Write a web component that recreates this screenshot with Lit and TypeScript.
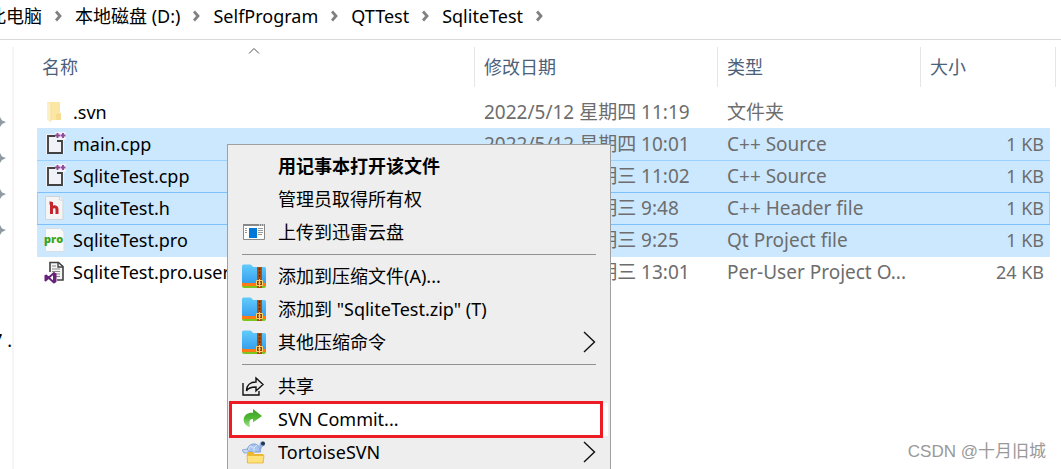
import { LitElement, html, css, svg, nothing } from "lit";
import { customElement } from "lit/decorators.js";
import { classMap } from "lit/directives/class-map.js";

const icons: Record<string, unknown> = {
  folder: svg`<svg viewBox="0 0 22 24" width="22" height="24">
    <path d="M3 2h13v11l1 1v6H3z" fill="#fbe6a4"/><path d="M12 14l5-1v7h-5z" fill="#f8dc8e"/>
    <path d="M3 2l4 2v18l-4-2z" fill="#fdefc4"/><path d="M7 4v18" stroke="#f3d68a" stroke-width=".6"/></svg>`,
  cpp: svg`<svg viewBox="0 0 22 24" width="22" height="24">
    <path d="M2 2h9V0h11v8h-2v14H2z" fill="#f1f1f8"/>
    <path d="M11 4H4v17h14V9H13" fill="none" stroke="#424242" stroke-width="1.900"/>
    <path d="M11 3.500h5M13.500 1v5M16.500 3.500h5M19 1v5" stroke="#93499b" stroke-width="1.900"/></svg>`,
  header: svg`<svg viewBox="0 0 22 24" width="22" height="24">
    <path d="M1.500 .500h14l3.500 3.500v19.500h-17.500z" fill="#f5f5f5" stroke="#cfd4d8"/><path d="M15.500 .500v3.500h3.500" fill="#fff" stroke="#cfd4d8"/>
    <path d="M7.500 6v12M7.500 12.500c1-2.500 5.500-2.500 5.500 1V18M5.500 7h2" fill="none" stroke="#c3272d" stroke-width="3"/></svg>`,
  pro: svg`<svg viewBox="0 0 22 24" width="22" height="24">
    <path d="M1.500 .500h15l3.500 3.500v19.500h-18.500z" fill="#fafafa" stroke="#d9dfe3"/>
    <text x="0" y="15" font-family="Open Sans, sans-serif" font-weight="800" font-size="11" fill="#3fa51b">pro</text></svg>`,
  user: svg`<svg viewBox="0 0 22 24" width="22" height="24">
    <path d="M6 12V2.500h8.500l4.500 4V20h-6" fill="#f4f4f4" stroke="#424242" stroke-width="1.600"/>
    <path d="M14 2.500V7h5" fill="none" stroke="#424242" stroke-width="1.400"/>
    <path d="M8 6h4M8 9h8M8 11.500h8M12 14h4M12 16.500h4" stroke="#8a8a8a"/>
    <path d="M1.500 15v5.500L10 13v9.500L1.500 15M10 13l1.500 1v7.500L10 22.500" fill="none" stroke="#68217a" stroke-width="2" stroke-linejoin="round"/></svg>`,
  disk: svg`<svg viewBox="0 0 24 24" width="24" height="24">
    <path d="M1.500 4.500h21v15h-21z" fill="#fff" stroke="#888"/><path d="M1 4h22v2H1z" fill="#888"/>
    <path d="M17 5h1M19 5h1M21 5h1" stroke="#fff"/>
    <path d="M7 8h8v10H7z" fill="#0078d7"/>
    <path d="M3 8.500h2M3 10.500h2M3 12.500h2M16 8.500h5M16 10.500h5M16 12.500h5M16 14.500h4" stroke="#9a9a9a"/></svg>`,
  zip: svg`<svg viewBox="0 0 24 24" width="24" height="24">
    <defs><linearGradient id="z" x2="0" y2="1"><stop stop-color="#62cbfb"/><stop offset="1" stop-color="#36a0ef"/></linearGradient></defs>
    <path d="M0 18h24v4q0 2-2 2H2q-2 0-2-2z" fill="#7cc51e"/><path d="M0 17h24v5H0z" fill="#ff7a12"/>
    <path d="M0 2q0-1.500 1.500-1.500H8q1 0 2 1.300t2 1.200h10.500Q24 3 24 4.500V19H1.500Q0 19 0 17.500z" fill="url(#z)"/>
    <path d="M15 3h5v21h-5z" fill="#b0500a"/>
    <path d="M17.500 4v12" stroke="#6e2e05" stroke-width="1.600" stroke-dasharray="2 1.500"/>
    <path d="M14.500 16.500h6v5h-6zM17.500 15v8M16 19h3" fill="#8f3e08" stroke="#ffd36b"/></svg>`,
  share: svg`<svg viewBox="0 0 24 24" width="24" height="24">
    <path d="M1 9v12h16v-4M14 4l7 6.500-7 6.500v-4c-5 0-8 1-9.500 4 0-6 4-9 9.500-9z" fill="none" stroke="#111" stroke-width="1.400"/></svg>`,
  commit: svg`<svg viewBox="0 0 24 24" width="24" height="24">
    <defs><linearGradient id="g" x2="0" y2="1"><stop stop-color="#3f9f27"/><stop offset=".5" stop-color="#4fb734"/><stop offset="1" stop-color="#a5e48f"/></linearGradient></defs>
    <path d="M11 2l9 7-9 6.500v-3.500c-4 0-4 3-3 8-4-1-6.500-4-6.300-7.500C2 8 5.500 5.500 11 5.800z" fill="url(#g)"/></svg>`,
  tortoise: svg`<svg viewBox="0 0 24 24" width="24" height="24">
    <path d="M5 12c0-5 3-8 7-8s6 3 6.500 8z" fill="#a9c4ef" stroke="#7a9ad0"/>
    <path d="M8 6l4 2 3-3M8 6l-2 5M12 8v4" stroke="#d8e6fb" fill="none"/>
    <path d="M0 10l5-1 3 4H2z" fill="#c7d8f4" stroke="#7895c8" stroke-width=".7"/>
    <path d="M17 10c1-1 0-5 1-7 1-2 5-2 5 1 0 2-2 2-3 3s0 3-2 4z" fill="#8aaee0"/><circle cx="21" cy="3.500" r="2" fill="#263650"/>
    <path d="M5 12h6l1.500 2h9v9H5z" fill="#ecb92e"/><path d="M5 15.500h17l-1 7.500H5.500z" fill="#ffe27b" stroke="#e8b331" stroke-width=".8"/></svg>`,
};

const files = [
  { icon: "folder", name: ".svn", date: "2022/5/12 星期四 11:19", type: "文件夹", size: "" },
  { icon: "cpp", name: "main.cpp", date: "2022/5/12 星期四 10:01", type: "C++ Source", size: "1 KB", sel: true },
  { icon: "cpp", name: "SqliteTest.cpp", date: "2022/5/11 星期三 11:02", type: "C++ Source", size: "1 KB", sel: true },
  { icon: "header", name: "SqliteTest.h", date: "2022/5/11 星期三 9:48", type: "C++ Header file", size: "1 KB", sel: true, focus: true },
  { icon: "pro", name: "SqliteTest.pro", date: "2022/5/11 星期三 9:25", type: "Qt Project file", size: "1 KB", sel: true },
  { icon: "user", name: "SqliteTest.pro.user", date: "2022/5/11 星期三 13:01", type: "Per-User Project O...", size: "24 KB" },
];

type Item = { icon?: string; label: string; bold?: boolean; sub?: boolean; hot?: boolean };
const groups: Item[][] = [
  [{ label: "用记事本打开该文件", bold: true }, { label: "管理员取得所有权" }, { icon: "disk", label: "上传到迅雷云盘" }],
  [{ icon: "zip", label: "添加到压缩文件(A)..." }, { icon: "zip", label: '添加到 "SqliteTest.zip" (T)' }, { icon: "zip", label: "其他压缩命令", sub: true }],
  [{ icon: "share", label: "共享" }, { icon: "commit", label: "SVN Commit...", hot: true }, { icon: "tortoise", label: "TortoiseSVN", sub: true }],
];

const path = ["此电脑", "本地磁盘 (D:)", "SelfProgram", "QTTest", "SqliteTest"];

@customElement("app-root")
export class AppRoot extends LitElement {
  static styles = css`
    :host {
      display: flex; flex-direction: column; position: relative;
      height: 100vh; overflow: hidden; background: #fff; color: #000;
      font: 18px/24px "Noto Sans", "Noto Sans CJK SC", sans-serif;
    }
    * { box-sizing: border-box; }
    svg { display: block; flex: none; }
    .path {
      display: flex; align-items: center; gap: 13px; height: 40px; flex: none;
      margin-left: -12px; padding-bottom: 7px; border-bottom: 1px solid #d9d9d9; white-space: nowrap;
    }
    .path a { color: inherit; text-decoration: none; }
    .body { display: flex; flex: 1; min-height: 0; padding-top: 7px; }
    .side { width: 14px; flex: none; border-right: 2px solid #f5f5f5; overflow: hidden; }
    .pins { list-style: none; margin: 0; padding: 57px 0 0; }
    .pins li { height: 36px; display: flex; align-items: center; }
    .drive { display: flex; justify-content: flex-end; padding-top: 80px; white-space: pre; }
    .list { flex: 1; min-width: 0; padding: 0 5px 0 23px; }
    table { width: 100%; border-collapse: separate; border-spacing: 0; table-layout: fixed; white-space: nowrap; }
    th {
      height: 40px; padding: 0 0 0 9px; text-align: left; font-weight: 400; color: #4c607a;
      border-right: 1px solid #e5e5e5; position: relative;
    }
    th.name { padding-left: 5px; }
    th.last { padding: 0; }
    .sort { position: absolute; left: 50%; top: 0; margin-left: -8px; }
    .date { width: 243px; }
    .type { width: 203px; }
    .size { width: 129px; }
    th.size { border-right: 0; }
    .last { width: 6px; }
    tbody::before { content: ""; display: block; height: 9px; }
    td { height: 32px; padding: 0 0 2px 9px; color: #6d6d6d; border-top: 1px solid transparent; font-size: 19px; }
    td.name { padding-left: 7px; color: #000; font-size: 18px; }
    td.size { text-align: right; padding-right: 6px; font-size: 18px; }
    .file { display: flex; align-items: center; gap: 7px; }
    .sel td { background: #cce8ff; border-top-color: #99d1ff; }
    .first td { border-top-color: #cce8ff; }
    .focus td { border-top-color: #7dc1fb; }
    .focus td.name { border-left: 1px solid #99d1ff; padding-left: 6px; }
    .focus td.size { border-right: 1px solid #99d1ff; padding-right: 5px; }
    .focus + .sel td { border-top-color: #7dc1fb; }
    .sel + .plain td { border-top-color: #cce8ff; }
    tr td.last { background: none; border: 0; padding: 0; }
    .menu {
      position: absolute; left: 227px; top: 144px; width: 384px;
      border: 1px solid #a0a0a0; background: #eee; padding: 5px 2px;
    }
    .item {
      display: flex; align-items: center; gap: 12px; width: 100%; height: 33px;
      border: 0; background: none; padding: 0 12px 2px; font: inherit; color: #000; text-align: left;
    }
    .label { flex: 1; white-space: nowrap; }
    .bold { font-weight: 700; }
    .hot { background: #fff; }
    .blank { width: 24px; }
    hr { height: 1px; border: 0; margin: 5px 12px; background: #919191; }
    .mark {
      position: absolute; left: 229px; top: 401px; width: 374px; height: 37px;
      border: 3px solid #ed1c24; pointer-events: none;
    }
    .credit {
      position: absolute; right: 15px; bottom: 5px; color: #999;
      font-family: "Liberation Sans", "Noto Sans CJK SC", sans-serif; font-size: 17px;
    }
  `;

  private chevron() {
    return html`<svg width="7" height="12" viewBox="0 0 7 12"><path d="M1 1.500l4 4.500-4 4.500" fill="none" stroke="#808080" stroke-width="2.800"/></svg>`;
  }

  render() {
    return html`
      <nav class="path">${path.map((p) => html`<a href="#">${p}</a>${this.chevron()}`)}</nav>
      <div class="body">
        <aside class="side">
          <ul class="pins">${[0, 1, 2, 3].map(() => html`<li><svg width="6" height="12" viewBox="0 0 6 12"><path d="M0 1l2 3.500L6 6 2 8l-2 3z" fill="#8f9ba3"/></svg></li>`)}</ul>
          <div class="drive">W7 .</div>
        </aside>
        <main class="list">
          <table>
            <thead><tr>
              <th class="name">名称<svg class="sort" width="12" height="7" viewBox="0 0 12 7"><path d="M1 6.500l5-5 5 5" fill="none" stroke="#555"/></svg></th>
              <th class="date">修改日期</th><th class="type">类型</th><th class="size">大小</th><th class="last"></th>
            </tr></thead>
            <tbody>${files.map((f, i) => html`
              <tr class=${classMap({ sel: !!f.sel, plain: !f.sel, focus: !!f.focus, first: i === 1 })}>
                <td class="name"><div class="file">${icons[f.icon]}<span>${f.name}</span></div></td>
                <td class="date">${f.date}</td><td class="type">${f.type}</td><td class="size">${f.size}</td><td class="last"></td>
              </tr>`)}</tbody>
          </table>
        </main>
      </div>
      <div class="menu" role="menu">
        ${groups.map((g, i) => html`${i ? html`<hr>` : nothing}${g.map((m) => html`
          <button role="menuitem" class=${classMap({ item: true, bold: !!m.bold, hot: !!m.hot })}>
            ${m.icon ? icons[m.icon] : html`<span class="blank"></span>`}
            <span class="label">${m.label}</span>
            ${m.sub ? html`<svg width="13" height="22" viewBox="0 0 13 22"><path d="M1 1l10.500 10L1 21" fill="none" stroke="#111" stroke-width="1.400"/></svg>` : nothing}
          </button>`)}`)}
      </div>
      <div class="mark"></div>
      <div class="credit">CSDN @十月旧城</div>`;
  }
}
